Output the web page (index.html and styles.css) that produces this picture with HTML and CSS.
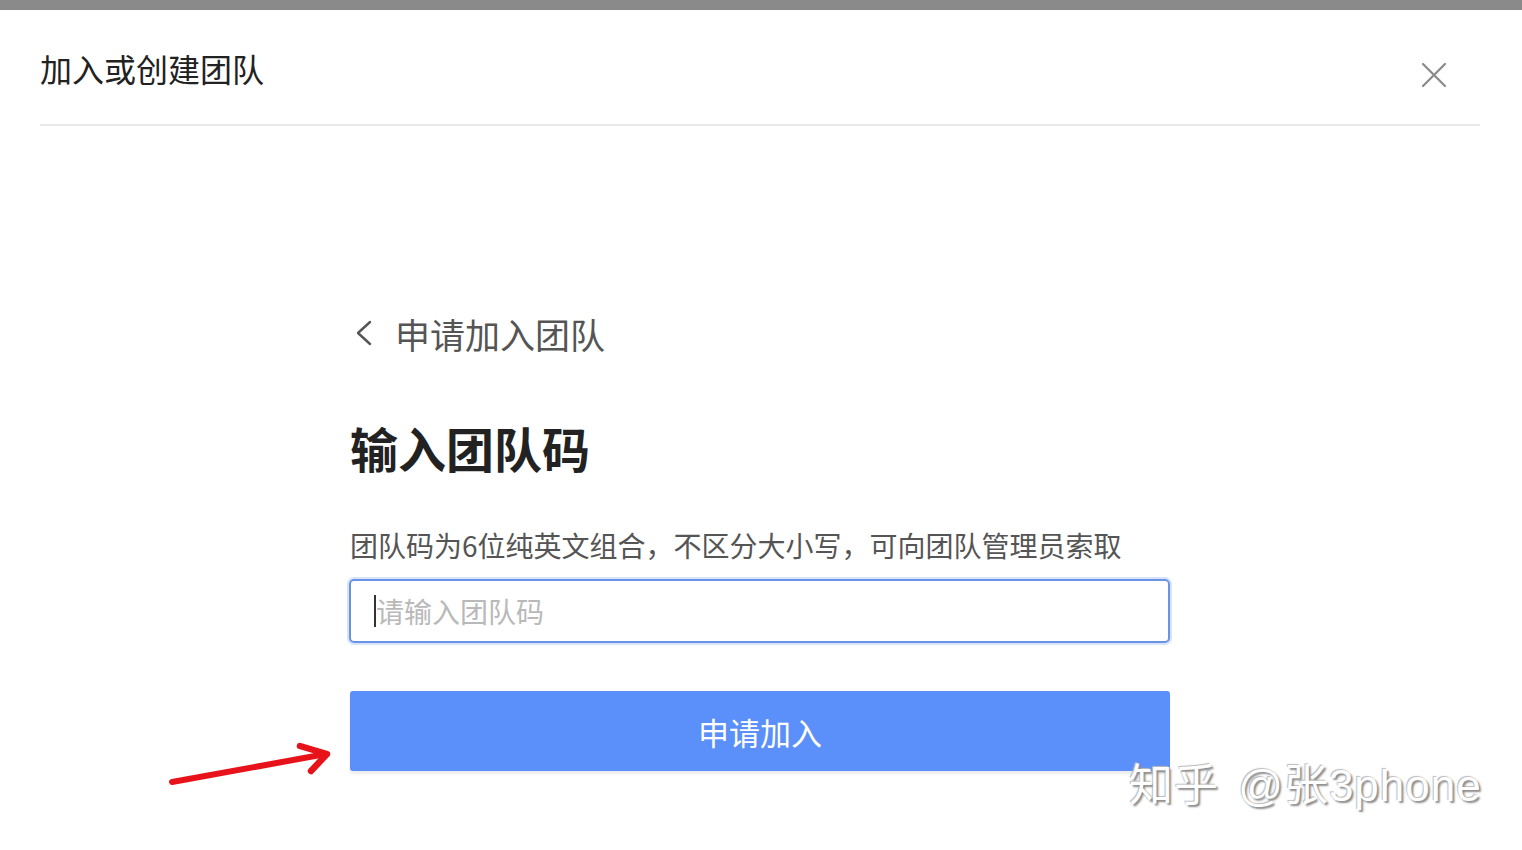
FILE: index.html
```html
<!DOCTYPE html>
<html lang="zh-CN">
<head>
<meta charset="utf-8">
<title>加入或创建团队</title>
<link rel="stylesheet" href="styles.css">
</head>
<body>
<div class="topbar"></div>
<div class="dialog">
  <header class="header">
    <h1 class="title">加入或创建团队</h1>
    <button class="close" aria-label="关闭">
      <svg width="26" height="26" viewBox="0 0 26 26"><path d="M2 2 L24 24 M24 2 L2 24" stroke="#8a8a8a" stroke-width="2.2" fill="none" stroke-linecap="round"/></svg>
    </button>
  </header>
  <main class="main">
    <div class="panel">
      <div class="back">
        <svg class="chev" width="20" height="26" viewBox="0 0 20 26"><path d="M16 2 L4 13 L16 24" stroke="#555" stroke-width="2.4" fill="none" stroke-linecap="round" stroke-linejoin="round"/></svg>
        <span>申请加入团队</span>
      </div>
      <h2 class="heading">输入团队码</h2>
      <p class="desc">团队码为6位纯英文组合，不区分大小写，可向团队管理员索取</p>
      <div class="input"><span class="caret"></span><span class="placeholder">请输入团队码</span></div>
      <button class="submit">申请加入</button>
    </div>
  </main>
  <svg class="arrow" width="180" height="50" viewBox="0 0 180 50">
    <path d="M6 42 L160 14" stroke="#e8121a" stroke-width="6" stroke-linecap="round" fill="none"/>
    <path d="M134 6 L161 14 L145 31" stroke="#e8121a" stroke-width="6.5" stroke-linecap="round" stroke-linejoin="round" fill="none"/>
  </svg>
  <div class="watermark">知乎 @张3phone</div>
</div>
</body>
</html>
```

FILE: styles.css
```css
* { box-sizing: border-box; }
html, body {
  margin: 0;
  padding: 0;
  background: #fff;
  font-family: "Noto Sans CJK SC", "Noto Sans", sans-serif;
}
.topbar {
  height: 10px;
  background: #8a8a8a;
}
.dialog {
  position: relative;
  height: 840px;
}
.header {
  display: flex;
  justify-content: space-between;
  align-items: flex-start;
  margin: 0 42px 0 40px;
  height: 116px;
  border-bottom: 2px solid #e9e9e9;
}
.title {
  margin: 37px 0 0;
  font-size: 32px;
  line-height: 42px;
  font-weight: 400;
  color: #222;
}
.close {
  margin: 52px 33px 0 0;
  padding: 0;
  border: 0;
  background: none;
  width: 26px;
  height: 26px;
}
.close svg { display: block; }
.main {
  display: flex;
  justify-content: center;
  padding-top: 183px;
}
.panel {
  width: 822px;
  display: flex;
  flex-direction: column;
}
.back {
  display: flex;
  align-items: center;
  height: 48px;
  font-size: 35px;
  color: #555;
  padding-left: 4px;
}
.chev { margin-right: 21px; }
.heading {
  margin: 58px 0 0;
  font-size: 48px;
  line-height: 64px;
  font-weight: 700;
  color: #222;
}
.desc {
  margin: 46px 0 0;
  font-size: 28px;
  line-height: 40px;
  color: #555;
}
.input {
  margin: 14px 0 0 -1px;
  width: 821px;
  height: 64px;
  border: 2px solid #6a94e3;
  border-radius: 5px;
  box-shadow: 0 0 0 2px #d6e3fb;
  display: flex;
  align-items: center;
  padding-left: 23px;
}
.caret {
  width: 2px;
  height: 32px;
  background: #333;
}
.placeholder {
  font-size: 28px;
  color: #b9b9b9;
  line-height: 40px;
}
.submit {
  margin-top: 48px;
  height: 80px;
  width: 820px;
  border: 0;
  border-radius: 3px;
  background: #5b8ff9;
  color: #fff;
  font-family: inherit;
  font-size: 31px;
  box-shadow: 0 3px 3px rgba(0,0,0,0.08);
}
.arrow {
  position: absolute;
  left: 166px;
  top: 730px;
}
.watermark {
  position: absolute;
  left: 1129px;
  top: 748px;
  font-size: 44px;
  line-height: 56px;
  color: #fff;
  letter-spacing: 1px;
  word-spacing: 6px;
  text-shadow: 2px 2px 2px #8a8a8a, -1px -1px 1px #bbb;
  font-family: "Liberation Sans", "Noto Sans CJK SC", sans-serif;
}
```
